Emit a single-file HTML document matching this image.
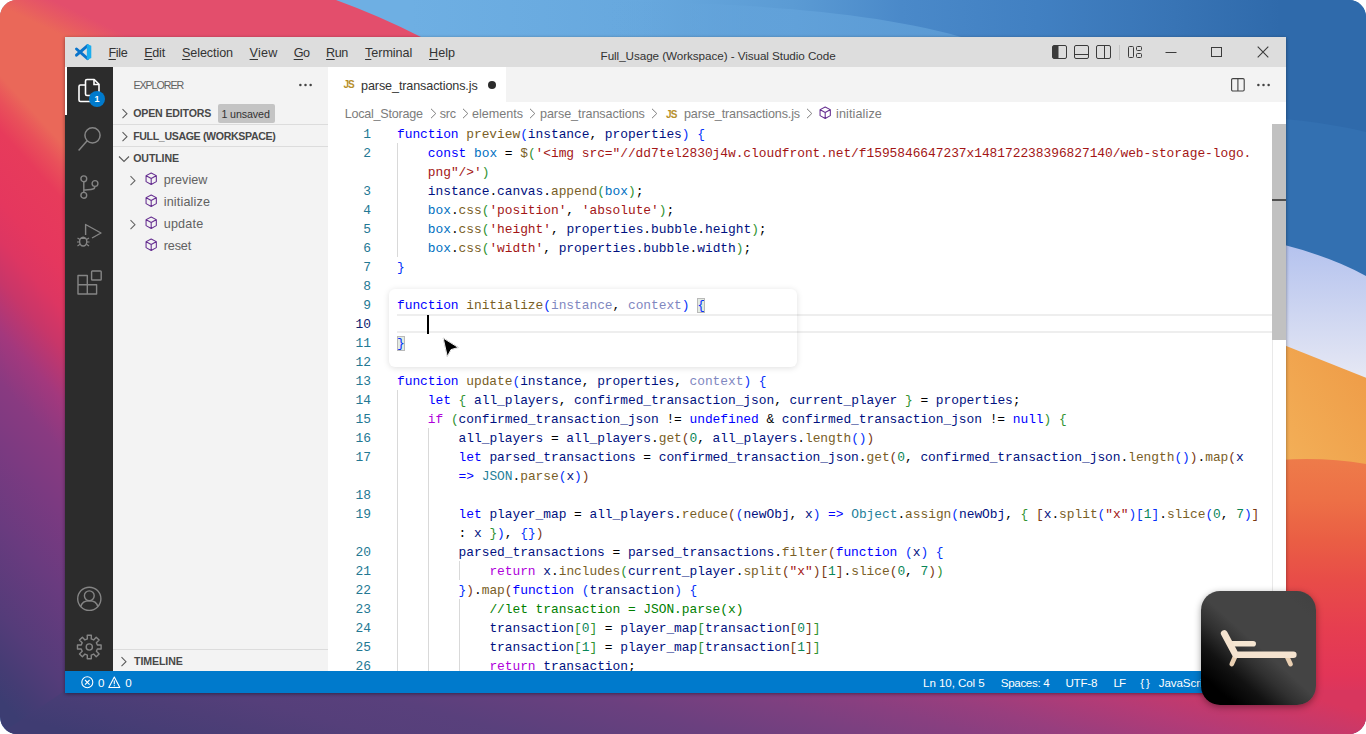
<!DOCTYPE html>
<html lang="en">
<head>
<meta charset="utf-8">
<title>Full_Usage (Workspace) - Visual Studio Code</title>
<style>
html,body{margin:0;padding:0;background:#fff;}
body{width:1366px;height:734px;position:relative;overflow:hidden;font-family:"Liberation Sans",sans-serif;}
#bg{position:absolute;left:0;top:0;width:1366px;height:734px;border-radius:17px;overflow:hidden;}
#bg svg{display:block;}
#win{position:absolute;left:65px;top:37px;width:1221px;height:656px;background:#fff;box-shadow:0 1px 3.500px rgba(0,0,0,.42);overflow:hidden;}
/* title bar */
#title{position:absolute;left:0;top:0;width:1221px;height:30px;background:#dddddd;color:#333;font-size:13px;}
#title .menu{position:absolute;top:0;height:30px;line-height:31px;font-size:12.6px;color:#333;white-space:nowrap;}
#title .menu u{text-decoration:underline;text-underline-offset:1.5px;}
#title .wt{position:absolute;top:0;left:0;width:1306px;text-align:center;line-height:37px;font-size:11.7px;color:#333;white-space:nowrap;}
/* activity bar */
#act{position:absolute;left:0;top:30px;width:48px;height:604px;background:#2c2c2c;}
#act svg{position:absolute;left:12px;}
/* side bar */
#side{position:absolute;left:48px;top:30px;width:215px;height:604px;background:#f3f3f3;color:#616161;font-size:13px;}
#side .hdr{position:absolute;left:20px;top:0;line-height:35px;font-size:10.6px;color:#6f6f6f;}
#side .sec{position:absolute;left:0;width:215px;height:22px;line-height:22px;font-weight:bold;font-size:10.4px;color:#3b3b3b;white-space:nowrap;}
#side .sec span.t{position:absolute;left:20px;top:0;}
#side .line{position:absolute;left:0;width:215px;height:1px;background:#dcdcdc;}
#side .it{position:absolute;left:0;width:215px;height:22px;line-height:22px;font-size:12.4px;color:#616161;white-space:nowrap;}
#side .it span.t{position:absolute;left:51px;top:0;}
/* editor */
#ed{position:absolute;left:263px;top:30px;width:958px;height:604px;background:#fff;overflow:hidden;}
#tabs{position:absolute;left:0;top:0;width:958px;height:35px;background:#f3f3f3;}
#tab{position:absolute;left:0;top:0;width:178px;height:35px;background:#fff;font-size:12.4px;color:#333;line-height:35px;white-space:nowrap;}
#crumbs{position:absolute;left:0;top:35px;width:958px;height:22px;line-height:22px;font-size:12.3px;color:#6a6a6a;white-space:nowrap;}
#code{position:absolute;left:0;top:57px;width:958px;height:547px;font-family:"Liberation Mono",monospace;font-size:12.9px;letter-spacing:-0.04px;}
.ln,.cl{margin-top:1px}
.ln{position:absolute;left:0;width:43px;text-align:right;height:19px;line-height:19px;color:#237893;white-space:pre;}
.cl{position:absolute;left:69px;height:19px;line-height:19px;color:#000;white-space:pre;}
.k{color:#0000ff}.f{color:#795e26}.v{color:#001080}.c{color:#0070c1}.s{color:#a31515}.n{color:#098658}
.ct{color:#af00db}.cm{color:#008000}.t{color:#267f99}.b1{color:#0431fa}.b2{color:#319331}.b3{color:#7b3814}
.un{color:#7f87bf}
.ln.cur{color:#0b216f}
.bm{background:#e3ebe3;outline:1px solid #b9b9b9;outline-offset:-1px}
.ig{position:absolute;width:1px;background:#d9d9d9;}
#card{position:absolute;left:389px;top:289px;width:408px;height:78px;border-radius:6px;box-shadow:0 1px 6px rgba(0,0,0,.13);pointer-events:none;}
#logo{position:absolute;left:1201px;top:590.500px;width:114.500px;height:114.500px;border-radius:19px;background:linear-gradient(222deg,#414141 0%,#444 15%,#444 49%,#303030 60%,#121212 72%,#000 86%);box-shadow:0 2px 7px rgba(0,0,0,.38);}
/* status */
#status{position:absolute;left:0;top:634px;width:1221px;height:22px;background:#007acc;color:#fff;font-size:11.6px;line-height:22px;white-space:nowrap;}
#status span{position:absolute;top:0;}
</style>
</head>
<body>
<div id="bg">
<svg width="1366" height="734" viewBox="0 0 1366 734">
<defs>
<linearGradient id="gBlue" gradientUnits="userSpaceOnUse" x1="0" y1="0" x2="1366" y2="0">
<stop offset="0.30" stop-color="#6eafe3"/><stop offset="0.47" stop-color="#67a8de"/><stop offset="0.58" stop-color="#5b9bd4"/><stop offset="0.66" stop-color="#4a89c9"/><stop offset="0.76" stop-color="#4180c2"/><stop offset="0.86" stop-color="#3874b5"/><stop offset="0.937" stop-color="#2f6aab"/><stop offset="1" stop-color="#2f6aab"/>
</linearGradient>
<linearGradient id="gSw" gradientUnits="userSpaceOnUse" x1="600" y1="0" x2="980" y2="0">
<stop offset="0" stop-color="#66a7dd" stop-opacity="0"/><stop offset="0.5" stop-color="#62a2da" stop-opacity="0.9"/><stop offset="1" stop-color="#5a99d3"/>
</linearGradient>
<linearGradient id="gRed" gradientUnits="userSpaceOnUse" x1="54" y1="31.6" x2="66" y2="6.4">
<stop offset="0" stop-color="#ea6859"/><stop offset="0.5" stop-color="#e75a62"/><stop offset="1" stop-color="#e34e6c"/>
</linearGradient>
<linearGradient id="gLeft" gradientUnits="userSpaceOnUse" x1="32" y1="0" x2="-333.6" y2="332.5">
<stop offset="0" stop-color="#ea6859"/><stop offset="0.15" stop-color="#ea6859"/><stop offset="0.185" stop-color="#e9505a"/><stop offset="0.226" stop-color="#e73b5b"/><stop offset="0.32" stop-color="#e5375e"/><stop offset="0.375" stop-color="#dd3662"/><stop offset="0.43" stop-color="#c83669"/><stop offset="0.50" stop-color="#a3387d"/><stop offset="0.568" stop-color="#893a81"/><stop offset="0.654" stop-color="#7b3a81"/><stop offset="0.763" stop-color="#693b7f"/><stop offset="0.886" stop-color="#543c79"/><stop offset="0.954" stop-color="#453c74"/><stop offset="1" stop-color="#3c3d72"/>
</linearGradient>
<linearGradient id="gBottom" gradientUnits="userSpaceOnUse" x1="0" y1="713" x2="98" y2="360">
<stop offset="0" stop-color="#3f3c72"/><stop offset="0.073" stop-color="#473d75"/><stop offset="0.146" stop-color="#4e3e77"/><stop offset="0.22" stop-color="#553f7a"/><stop offset="0.322" stop-color="#59407c"/><stop offset="0.476" stop-color="#6b407f"/><stop offset="0.586" stop-color="#7c4080"/><stop offset="0.659" stop-color="#893f80"/><stop offset="0.732" stop-color="#983e7e"/><stop offset="0.842" stop-color="#b43b76"/><stop offset="0.952" stop-color="#cd3866"/><stop offset="1" stop-color="#d8365e"/>
</linearGradient>
<linearGradient id="gLav" x1="0" y1="0" x2="0" y2="1">
<stop offset="0" stop-color="#b4c2ee"/><stop offset="1" stop-color="#e6e8f4"/>
</linearGradient>
<linearGradient id="gOr" x1="1" y1="0" x2="0" y2="1">
<stop offset="0" stop-color="#ee9a46"/><stop offset="1" stop-color="#f3b058"/>
</linearGradient>
<linearGradient id="gRight" gradientUnits="userSpaceOnUse" x1="0" y1="455" x2="0" y2="734">
<stop offset="0" stop-color="#ee7c4a"/><stop offset="0.16" stop-color="#ed7046"/><stop offset="0.305" stop-color="#ea5e44"/><stop offset="0.45" stop-color="#e84c48"/><stop offset="0.62" stop-color="#e63e50"/><stop offset="0.79" stop-color="#e23558"/><stop offset="0.895" stop-color="#d63661"/><stop offset="1" stop-color="#c43a6c"/>
</linearGradient>
</defs>
<rect x="0" y="0" width="1366" height="734" fill="url(#gBlue)"/>
<path d="M600 0 C 760 4 880 12 972 40 L600 40 Z" fill="url(#gSw)"/>
<rect x="1280" y="0" width="86" height="300" fill="#2f6aab"/>
<path d="M1280 118.500 Q1330 123 1366 132 V300 H1280 Z" fill="#3370b1"/>
<rect x="0" y="0" width="110" height="734" fill="url(#gLeft)"/>
<path d="M0 0 H336 Q380 16 421 37 V60 H66 V37 H0 Z" fill="url(#gRed)"/>
<rect x="1280" y="455" width="86" height="279" fill="url(#gRight)"/>
<path d="M1280 340 L1366 374 V464 Q1325 457 1280 460 Z" fill="url(#gOr)"/>
<path d="M1280 243.800 Q1332 257 1366 276 V377.700 L1280 343.400 Z" fill="url(#gLav)"/>
<path d="M66 690 H1366 V734 H0 V734 Z" fill="url(#gBottom)"/>
</svg>
</div>
<div id="win">
<div id="title">
<svg style="position:absolute;left:5px;top:3px" width="28" height="24" viewBox="0 0 28 24"><g fill="none" stroke="#0a74cb" stroke-width="2.9" stroke-linecap="round"><path d="M6.500 9 L17.600 18.600"/><path d="M6.500 15.200 L17.600 5.600"/></g><path d="M16.850 4.100 L21.300 5.800 V18 L16.850 20.100 Z" fill="#1badee"/></svg>
<span style="position:absolute;left:43.5px;top:0px;line-height:33px;font-size:12.6px;letter-spacing:-0.348px;white-space:pre;color:#333;text-underline-offset:1.5px;"><u>F</u>ile</span>
<span style="position:absolute;left:79.2px;top:0px;line-height:33px;font-size:12.6px;letter-spacing:-0.250px;white-space:pre;color:#333;text-underline-offset:1.5px;"><u>E</u>dit</span>
<span style="position:absolute;left:117.0px;top:0px;line-height:33px;font-size:12.6px;letter-spacing:-0.090px;white-space:pre;color:#333;text-underline-offset:1.5px;"><u>S</u>election</span>
<span style="position:absolute;left:184.6px;top:0px;line-height:33px;font-size:12.6px;letter-spacing:0.208px;white-space:pre;color:#333;text-underline-offset:1.5px;"><u>V</u>iew</span>
<span style="position:absolute;left:228.7px;top:0px;line-height:33px;font-size:12.6px;letter-spacing:-0.450px;white-space:pre;color:#333;text-underline-offset:1.5px;"><u>G</u>o</span>
<span style="position:absolute;left:261.1px;top:0px;line-height:33px;font-size:12.6px;letter-spacing:-0.501px;white-space:pre;color:#333;text-underline-offset:1.5px;"><u>R</u>un</span>
<span style="position:absolute;left:300.1px;top:0px;line-height:33px;font-size:12.6px;letter-spacing:-0.061px;white-space:pre;color:#333;text-underline-offset:1.5px;"><u>T</u>erminal</span>
<span style="position:absolute;left:364.0px;top:0px;line-height:33px;font-size:12.6px;letter-spacing:0.075px;white-space:pre;color:#333;text-underline-offset:1.5px;"><u>H</u>elp</span>
<span style="position:absolute;left:535.6px;top:0px;line-height:37px;font-size:11.7px;letter-spacing:-0.069px;white-space:pre;color:#333;">Full_Usage (Workspace) - Visual Studio Code</span>
<svg style="position:absolute;left:987px;top:8px" width="15" height="14" viewBox="0 0 15 14"><rect x="0.5" y="0.5" width="14" height="13" rx="1.5" fill="none" stroke="#3b3b3b"/><path d="M1 1 H6.5 V13 H1 Z" fill="#3b3b3b"/></svg>
<svg style="position:absolute;left:1009px;top:8px" width="15" height="14" viewBox="0 0 15 14"><rect x="0.5" y="0.5" width="14" height="13" rx="1.5" fill="none" stroke="#3b3b3b"/><path d="M1 9.5 H14" stroke="#3b3b3b" fill="none"/></svg>
<svg style="position:absolute;left:1031px;top:8px" width="15" height="14" viewBox="0 0 15 14"><rect x="0.5" y="0.5" width="14" height="13" rx="1.5" fill="none" stroke="#3b3b3b"/><path d="M8.5 1 V13" stroke="#3b3b3b" fill="none"/></svg>
<div style="position:absolute;left:1054px;top:8px;width:1px;height:15px;background:#c4c4c4"></div>
<svg style="position:absolute;left:1063px;top:8px" width="15" height="14" viewBox="0 0 15 14"><rect x="0.5" y="1.5" width="5" height="11" rx="1" fill="none" stroke="#3b3b3b"/><rect x="8.5" y="1.5" width="5" height="4" rx="1" fill="none" stroke="#3b3b3b"/><rect x="8.5" y="8.5" width="5" height="4" rx="1" fill="none" stroke="#3b3b3b"/></svg>
<svg style="position:absolute;left:1100px;top:10px" width="12" height="12" viewBox="0 0 12 12"><path d="M0.5 5.5 H11.5" stroke="#3b3b3b" fill="none"/></svg>
<svg style="position:absolute;left:1146px;top:10px" width="11" height="11" viewBox="0 0 11 11"><rect x="0.5" y="0.5" width="10" height="9" fill="none" stroke="#3b3b3b"/></svg>
<svg style="position:absolute;left:1192px;top:9px" width="12" height="12" viewBox="0 0 12 12"><path d="M0.7 0.7 L11.3 11.3 M11.3 0.7 L0.7 11.3" stroke="#3b3b3b" stroke-width="1.1" fill="none"/></svg>
</div>
<div id="act">
<div style="position:absolute;left:0;top:0;width:2px;height:48px;background:#fff"></div>
<svg style="position:absolute;left:12px;top:10px" width="26" height="26" viewBox="0 0 26 26"><path d="M8.5 4 Q8.5 2.5 10 2.5 H17.2 L22 7.3 V17 Q22 18.5 20.5 18.5 H10 Q8.5 18.5 8.5 17 Z" fill="none" stroke="#fff" stroke-width="1.6" stroke-linejoin="round"/><path d="M17 2.5 V7.5 H22" fill="none" stroke="#fff" stroke-width="1.6"/><path d="M8.5 8 H3.5 Q2 8 2 9.5 V23 Q2 24.5 3.5 24.5 H13.5 Q15 24.5 15 23 V18.5" fill="none" stroke="#fff" stroke-width="1.6" stroke-linejoin="round"/></svg>
<div style="position:absolute;left:24px;top:54px;width:16px;height:16px;border-radius:8px;background:#007acc;color:#fff;font-size:9px;font-weight:bold;line-height:16px;text-align:center;top:24px">1</div>
<svg style="position:absolute;left:12px;top:58px" width="26" height="28" viewBox="0 0 26 28"><circle cx="15.5" cy="10.3" r="7.6" fill="none" stroke="#858585" stroke-width="1.5"/><path d="M10.2 15.8 L1.6 25.5" stroke="#858585" stroke-width="1.5" fill="none"/></svg>
<svg style="position:absolute;left:12px;top:106px" width="26" height="28" viewBox="0 0 26 28"><circle cx="6.8" cy="5.8" r="2.9" fill="none" stroke="#858585" stroke-width="1.4"/><circle cx="18" cy="10.5" r="2.9" fill="none" stroke="#858585" stroke-width="1.4"/><circle cx="6.8" cy="22.3" r="2.9" fill="none" stroke="#858585" stroke-width="1.4"/><path d="M6.8 8.7 V19.4 M18 13.4 C18 17 13 16.3 6.8 17" fill="none" stroke="#858585" stroke-width="1.4"/></svg>
<svg style="position:absolute;left:12px;top:154px" width="28" height="28" viewBox="0 0 28 28"><path d="M8.6 14 V3.5 L24 12 L15 17" fill="none" stroke="#858585" stroke-width="1.4" stroke-linejoin="round"/><ellipse cx="6.2" cy="20.6" rx="3.6" ry="4.4" fill="none" stroke="#858585" stroke-width="1.4"/><path d="M0.5 17 L3 18.5 M0 21 H2.6 M0.5 25 L3 23.3 M12 17 L9.5 18.5 M12.5 21 H9.8 M12 25 L9.5 23.3 M3.5 17.5 H9" stroke="#858585" stroke-width="1.2" fill="none"/></svg>
<svg style="position:absolute;left:12px;top:203px" width="26" height="26" viewBox="0 0 26 26"><path d="M1 5.5 H10.3 V14.8 H19.6 V24 H1 Z M1 14.8 H10.3 V24" fill="none" stroke="#858585" stroke-width="1.4" stroke-linejoin="round"/><rect x="14.6" y="1" width="9.6" height="9" rx="0.8" fill="none" stroke="#858585" stroke-width="1.4"/></svg>
<svg style="position:absolute;left:11px;top:519px" width="27" height="27" viewBox="0 0 27 27"><circle cx="13.3" cy="12.8" r="11.6" fill="none" stroke="#858585" stroke-width="1.4"/><circle cx="13.3" cy="9.8" r="4.9" fill="none" stroke="#858585" stroke-width="1.4"/><path d="M4.8 20.6 C6 15.6 10 14.7 13.3 14.7 C16.6 14.7 20.6 15.6 21.8 20.6" fill="none" stroke="#858585" stroke-width="1.4"/></svg>
<svg style="position:absolute;left:11px;top:567px" width="27" height="27" viewBox="0 0 27 27"><path d="M25.12 10.94 L25.12 15.06 L21.37 14.94 L20.38 17.34 L23.12 19.90 L20.20 22.82 L17.64 20.08 L15.24 21.07 L15.36 24.82 L11.24 24.82 L11.36 21.07 L8.96 20.08 L6.40 22.82 L3.48 19.90 L6.22 17.34 L5.23 14.94 L1.48 15.06 L1.48 10.94 L5.23 11.06 L6.22 8.66 L3.48 6.10 L6.40 3.18 L8.96 5.92 L11.36 4.93 L11.24 1.18 L15.36 1.18 L15.24 4.93 L17.64 5.92 L20.20 3.18 L23.12 6.10 L20.38 8.66 L21.37 11.06 Z" fill="none" stroke="#858585" stroke-width="1.4" stroke-linejoin="round"/><circle cx="13.3" cy="13" r="3.1" fill="none" stroke="#858585" stroke-width="1.4"/></svg>
</div>
<div id="side">
<span style="position:absolute;left:20.4px;top:0px;line-height:36px;font-size:10.7px;letter-spacing:-1.051px;white-space:pre;color:#616161;">EXPLORER</span>
<svg style="position:absolute;left:185px;top:15px" width="16" height="6" viewBox="0 0 16 6"><circle cx="2.400" cy="3" r="1.250" fill="#424242"/><circle cx="7.500" cy="3" r="1.250" fill="#424242"/><circle cx="12.600" cy="3" r="1.250" fill="#424242"/></svg>
<svg style="position:absolute;left:7.5px;top:41.0px" width="8" height="12" viewBox="0 0 8 12"><path d="M1.5 1.2 L6 5.700 L1.5 10.200" fill="none" stroke="#5a5a5a" stroke-width="1.05"/></svg>
<span style="position:absolute;left:20.2px;top:35px;line-height:23px;font-size:10.6px;letter-spacing:-0.155px;white-space:pre;font-weight:bold;color:#484848;">OPEN EDITORS</span>
<div style="position:absolute;left:104.5px;top:37px;width:57px;height:18.5px;border-radius:2px;background:#c4c4c4"></div>
<span style="position:absolute;left:108.4px;top:35px;line-height:24px;font-size:10.7px;letter-spacing:-0.102px;white-space:pre;color:#333;">1 unsaved</span>
<div class="line" style="top:57px"></div>
<svg style="position:absolute;left:7.5px;top:63.5px" width="8" height="12" viewBox="0 0 8 12"><path d="M1.5 1.2 L6 5.700 L1.5 10.200" fill="none" stroke="#5a5a5a" stroke-width="1.05"/></svg>
<span style="position:absolute;left:20.2px;top:58px;line-height:22px;font-size:10.6px;letter-spacing:-0.349px;white-space:pre;font-weight:bold;color:#484848;">FULL_USAGE (WORKSPACE)</span>
<div class="line" style="top:79px"></div>
<svg style="position:absolute;left:4.5px;top:88px" width="12" height="8" viewBox="0 0 12 8"><path d="M1 1.5 L6 6.5 L11 1.5" fill="none" stroke="#5a5a5a" stroke-width="1.1"/></svg>
<span style="position:absolute;left:20.2px;top:80px;line-height:22px;font-size:10.6px;letter-spacing:-0.099px;white-space:pre;font-weight:bold;color:#484848;">OUTLINE</span>
<svg style="position:absolute;left:16px;top:107.5px" width="8" height="12" viewBox="0 0 8 12"><path d="M1.5 1.2 L6 5.700 L1.5 10.200" fill="none" stroke="#646464" stroke-width="1.05"/></svg>
<svg style="position:absolute;left:32.30000000000001px;top:105.2px" width="12.4" height="13.4" viewBox="0 0 14 15"><path d="M7 1 L12.8 4 V10.8 L7 14 L1.2 10.8 V4 Z M1.4 4.1 L7 7.2 L12.6 4.1 M7 7.2 V13.8" fill="none" stroke="#652d90" stroke-width="1.2" stroke-linejoin="round"/></svg>
<span style="position:absolute;left:50.7px;top:102px;line-height:22px;font-size:12.6px;letter-spacing:0.058px;white-space:pre;color:#616161;">preview</span>
<svg style="position:absolute;left:32.30000000000001px;top:127.2px" width="12.4" height="13.4" viewBox="0 0 14 15"><path d="M7 1 L12.8 4 V10.8 L7 14 L1.2 10.8 V4 Z M1.4 4.1 L7 7.2 L12.6 4.1 M7 7.2 V13.8" fill="none" stroke="#652d90" stroke-width="1.2" stroke-linejoin="round"/></svg>
<span style="position:absolute;left:50.7px;top:124px;line-height:22px;font-size:12.6px;letter-spacing:0.160px;white-space:pre;color:#616161;">initialize</span>
<svg style="position:absolute;left:16px;top:151.5px" width="8" height="12" viewBox="0 0 8 12"><path d="M1.5 1.2 L6 5.700 L1.5 10.200" fill="none" stroke="#646464" stroke-width="1.05"/></svg>
<svg style="position:absolute;left:32.30000000000001px;top:149.2px" width="12.4" height="13.4" viewBox="0 0 14 15"><path d="M7 1 L12.8 4 V10.8 L7 14 L1.2 10.8 V4 Z M1.4 4.1 L7 7.2 L12.6 4.1 M7 7.2 V13.8" fill="none" stroke="#652d90" stroke-width="1.2" stroke-linejoin="round"/></svg>
<span style="position:absolute;left:50.7px;top:146px;line-height:22px;font-size:12.6px;letter-spacing:0.197px;white-space:pre;color:#616161;">update</span>
<svg style="position:absolute;left:32.30000000000001px;top:171.2px" width="12.4" height="13.4" viewBox="0 0 14 15"><path d="M7 1 L12.8 4 V10.8 L7 14 L1.2 10.8 V4 Z M1.4 4.1 L7 7.2 L12.6 4.1 M7 7.2 V13.8" fill="none" stroke="#652d90" stroke-width="1.2" stroke-linejoin="round"/></svg>
<span style="position:absolute;left:50.7px;top:168px;line-height:22px;font-size:12.6px;letter-spacing:-0.120px;white-space:pre;color:#616161;">reset</span>
<div class="line" style="top:582px"></div>
<svg style="position:absolute;left:7px;top:588.5px" width="8" height="12" viewBox="0 0 8 12"><path d="M1.5 1.2 L6 5.700 L1.5 10.200" fill="none" stroke="#5a5a5a" stroke-width="1.05"/></svg>
<span style="position:absolute;left:21.0px;top:583px;line-height:22px;font-size:10.6px;letter-spacing:-0.092px;white-space:pre;font-weight:bold;color:#484848;">TIMELINE</span>
</div>
<div id="ed">
<div id="tabs"><div id="tab">
<span style="position:absolute;left:15.4px;top:0px;line-height:35px;font-size:10px;letter-spacing:-0.916px;white-space:pre;font-weight:bold;color:#b7902c;">JS</span>
<span style="position:absolute;left:33.1px;top:1px;line-height:36px;font-size:12.6px;letter-spacing:-0.119px;white-space:pre;color:#333;">parse_transactions.js</span>
<div style="position:absolute;left:160px;top:14px;width:8px;height:8px;border-radius:4px;background:#2b2b2b"></div>
</div>
<svg style="position:absolute;left:902.5px;top:11px" width="14" height="14" viewBox="0 0 14 14"><rect x="0.6" y="0.6" width="12.6" height="12.4" rx="1.2" fill="none" stroke="#424242" stroke-width="1.1"/><path d="M6.9 0.6 V13" stroke="#424242" stroke-width="1.1"/></svg>
<svg style="position:absolute;left:927.5px;top:15px" width="16" height="6" viewBox="0 0 16 6"><circle cx="2.400" cy="3" r="1.250" fill="#424242"/><circle cx="7.500" cy="3" r="1.250" fill="#424242"/><circle cx="12.600" cy="3" r="1.250" fill="#424242"/></svg>
</div>
<div id="crumbs">
<span style="position:absolute;left:16.7px;top:1px;line-height:23px;font-size:12.6px;letter-spacing:-0.240px;white-space:pre;color:#7c7c7c;">Local_Storage</span>
<svg style="position:absolute;left:101.5px;top:5.799999999999997px" width="7" height="11" viewBox="0 0 7 11"><path d="M1 0.8 L5.8 5.5 L1 10.2" fill="none" stroke="#7c7c7c" stroke-width="1"/></svg>
<span style="position:absolute;left:111.7px;top:1px;line-height:23px;font-size:12.6px;letter-spacing:-0.263px;white-space:pre;color:#7c7c7c;">src</span>
<svg style="position:absolute;left:133.5px;top:5.799999999999997px" width="7" height="11" viewBox="0 0 7 11"><path d="M1 0.8 L5.8 5.5 L1 10.2" fill="none" stroke="#7c7c7c" stroke-width="1"/></svg>
<span style="position:absolute;left:143.9px;top:1px;line-height:23px;font-size:12.6px;letter-spacing:0.012px;white-space:pre;color:#7c7c7c;">elements</span>
<svg style="position:absolute;left:200.5px;top:5.799999999999997px" width="7" height="11" viewBox="0 0 7 11"><path d="M1 0.8 L5.8 5.5 L1 10.2" fill="none" stroke="#7c7c7c" stroke-width="1"/></svg>
<span style="position:absolute;left:212.0px;top:1px;line-height:23px;font-size:12.6px;letter-spacing:-0.089px;white-space:pre;color:#7c7c7c;">parse_transactions</span>
<svg style="position:absolute;left:322.5px;top:5.799999999999997px" width="7" height="11" viewBox="0 0 7 11"><path d="M1 0.8 L5.8 5.5 L1 10.2" fill="none" stroke="#7c7c7c" stroke-width="1"/></svg>
<span style="position:absolute;left:338.1px;top:1px;line-height:23px;font-size:10px;letter-spacing:-0.866px;white-space:pre;font-weight:bold;color:#b7902c;">JS</span>
<span style="position:absolute;left:356.0px;top:1px;line-height:23px;font-size:12.6px;letter-spacing:-0.143px;white-space:pre;color:#7c7c7c;">parse_transactions.js</span>
<svg style="position:absolute;left:478px;top:5.799999999999997px" width="7" height="11" viewBox="0 0 7 11"><path d="M1 0.8 L5.8 5.5 L1 10.2" fill="none" stroke="#7c7c7c" stroke-width="1"/></svg>
<svg style="position:absolute;left:490.5px;top:4.2px" width="12.4" height="13.4" viewBox="0 0 14 15"><path d="M7 1 L12.8 4 V10.8 L7 14 L1.2 10.8 V4 Z M1.4 4.1 L7 7.2 L12.6 4.1 M7 7.2 V13.8" fill="none" stroke="#652d90" stroke-width="1.2" stroke-linejoin="round"/></svg>
<span style="position:absolute;left:508.1px;top:1px;line-height:23px;font-size:12.6px;letter-spacing:0.100px;white-space:pre;color:#7c7c7c;">initialize</span>
</div>
<div id="code">
<div style="position:absolute;left:69px;top:190px;width:875px;height:15px;border-top:2px solid #eee;border-bottom:2px solid #eee"></div>
<div class="ln" style="top:0px">1</div>
<div class="cl" style="top:0px;left:69.0px"><span class="k">function</span> <span class="f">preview</span><span class="b1">(</span><span class="v">instance</span>, <span class="v">properties</span><span class="b1">)</span> <span class="b1">{</span></div>
<div class="ln" style="top:19px">2</div>
<div class="cl" style="top:19px;left:99.8px"><span class="k">const</span> <span class="c">box</span> = <span class="f">$</span><span class="b2">(</span><span class="s">&#x27;&lt;img src=&quot;//dd7tel2830j4w.cloudfront.net/f1595846647237x148172238396827140/web-storage-logo.</span></div>
<div class="cl" style="top:38px;left:99.8px"><span class="s">png&quot;/&gt;&#x27;</span><span class="b2">)</span></div>
<div class="ln" style="top:57px">3</div>
<div class="cl" style="top:57px;left:99.8px"><span class="v">instance</span>.<span class="v">canvas</span>.<span class="f">append</span><span class="b2">(</span><span class="c">box</span><span class="b2">)</span>;</div>
<div class="ln" style="top:76px">4</div>
<div class="cl" style="top:76px;left:99.8px"><span class="c">box</span>.<span class="f">css</span><span class="b2">(</span><span class="s">&#x27;position&#x27;</span>, <span class="s">&#x27;absolute&#x27;</span><span class="b2">)</span>;</div>
<div class="ln" style="top:95px">5</div>
<div class="cl" style="top:95px;left:99.8px"><span class="c">box</span>.<span class="f">css</span><span class="b2">(</span><span class="s">&#x27;height&#x27;</span>, <span class="v">properties</span>.<span class="v">bubble</span>.<span class="v">height</span><span class="b2">)</span>;</div>
<div class="ln" style="top:114px">6</div>
<div class="cl" style="top:114px;left:99.8px"><span class="c">box</span>.<span class="f">css</span><span class="b2">(</span><span class="s">&#x27;width&#x27;</span>, <span class="v">properties</span>.<span class="v">bubble</span>.<span class="v">width</span><span class="b2">)</span>;</div>
<div class="ln" style="top:133px">7</div>
<div class="cl" style="top:133px;left:69.0px"><span class="b1">}</span></div>
<div class="ln" style="top:152px">8</div>
<div class="ln" style="top:171px">9</div>
<div class="cl" style="top:171px;left:69.0px"><span class="k">function</span> <span class="f">initialize</span><span class="b1">(</span><span class="un">instance</span>, <span class="un">context</span><span class="b1">)</span> <span class="b1 bm">{</span></div>
<div class="ln cur" style="top:190px">10</div>
<div class="ln" style="top:209px">11</div>
<div class="cl" style="top:209px;left:69.0px"><span class="b1 bm">}</span></div>
<div class="ln" style="top:228px">12</div>
<div class="ln" style="top:247px">13</div>
<div class="cl" style="top:247px;left:69.0px"><span class="k">function</span> <span class="f">update</span><span class="b1">(</span><span class="v">instance</span>, <span class="v">properties</span>, <span class="un">context</span><span class="b1">)</span> <span class="b1">{</span></div>
<div class="ln" style="top:266px">14</div>
<div class="cl" style="top:266px;left:99.8px"><span class="k">let</span> <span class="b2">{</span> <span class="v">all_players</span>, <span class="v">confirmed_transaction_json</span>, <span class="v">current_player</span> <span class="b2">}</span> = <span class="v">properties</span>;</div>
<div class="ln" style="top:285px">15</div>
<div class="cl" style="top:285px;left:99.8px"><span class="ct">if</span> <span class="b2">(</span><span class="v">confirmed_transaction_json</span> != <span class="k">undefined</span> &amp; <span class="v">confirmed_transaction_json</span> != <span class="k">null</span><span class="b2">)</span> <span class="b2">{</span></div>
<div class="ln" style="top:304px">16</div>
<div class="cl" style="top:304px;left:130.6px"><span class="v">all_players</span> = <span class="v">all_players</span>.<span class="f">get</span><span class="b3">(</span><span class="n">0</span>, <span class="v">all_players</span>.<span class="f">length</span><span class="b1">()</span><span class="b3">)</span></div>
<div class="ln" style="top:323px">17</div>
<div class="cl" style="top:323px;left:130.6px"><span class="k">let</span> <span class="v">parsed_transactions</span> = <span class="v">confirmed_transaction_json</span>.<span class="f">get</span><span class="b3">(</span><span class="n">0</span>, <span class="v">confirmed_transaction_json</span>.<span class="f">length</span><span class="b1">()</span><span class="b3">)</span>.<span class="f">map</span><span class="b3">(</span><span class="v">x</span></div>
<div class="cl" style="top:342px;left:130.6px"><span class="k">=&gt;</span> <span class="t">JSON</span>.<span class="f">parse</span><span class="b1">(</span><span class="v">x</span><span class="b1">)</span><span class="b3">)</span></div>
<div class="ln" style="top:361px">18</div>
<div class="ln" style="top:380px">19</div>
<div class="cl" style="top:380px;left:130.6px"><span class="k">let</span> <span class="v">player_map</span> = <span class="v">all_players</span>.<span class="f">reduce</span><span class="b3">(</span><span class="b1">(</span><span class="v">newObj</span>, <span class="v">x</span><span class="b1">)</span> <span class="k">=&gt;</span> <span class="t">Object</span>.<span class="f">assign</span><span class="b1">(</span><span class="v">newObj</span>, <span class="b2">{</span> <span class="b3">[</span><span class="v">x</span>.<span class="f">split</span><span class="b1">(</span><span class="s">&quot;x&quot;</span><span class="b1">)</span><span class="b1">[</span><span class="n">1</span><span class="b1">]</span>.<span class="f">slice</span><span class="b1">(</span><span class="n">0</span>, <span class="n">7</span><span class="b1">)</span><span class="b3">]</span></div>
<div class="cl" style="top:399px;left:130.6px">: <span class="v">x</span> <span class="b2">}</span><span class="b1">)</span>, <span class="b1">{}</span><span class="b3">)</span></div>
<div class="ln" style="top:418px">20</div>
<div class="cl" style="top:418px;left:130.6px"><span class="v">parsed_transactions</span> = <span class="v">parsed_transactions</span>.<span class="f">filter</span><span class="b3">(</span><span class="k">function</span> <span class="b1">(</span><span class="v">x</span><span class="b1">)</span> <span class="b1">{</span></div>
<div class="ln" style="top:437px">21</div>
<div class="cl" style="top:437px;left:161.4px"><span class="ct">return</span> <span class="v">x</span>.<span class="f">includes</span><span class="b2">(</span><span class="v">current_player</span>.<span class="f">split</span><span class="b3">(</span><span class="s">&quot;x&quot;</span><span class="b3">)</span><span class="b3">[</span><span class="n">1</span><span class="b3">]</span>.<span class="f">slice</span><span class="b3">(</span><span class="n">0</span>, <span class="n">7</span><span class="b3">)</span><span class="b2">)</span></div>
<div class="ln" style="top:456px">22</div>
<div class="cl" style="top:456px;left:130.6px"><span class="b1">}</span><span class="b3">)</span>.<span class="f">map</span><span class="b3">(</span><span class="k">function</span> <span class="b1">(</span><span class="v">transaction</span><span class="b1">)</span> <span class="b1">{</span></div>
<div class="ln" style="top:475px">23</div>
<div class="cl" style="top:475px;left:161.4px"><span class="cm">//let transaction = JSON.parse(x)</span></div>
<div class="ln" style="top:494px">24</div>
<div class="cl" style="top:494px;left:161.4px"><span class="v">transaction</span><span class="b2">[</span><span class="n">0</span><span class="b2">]</span> = <span class="v">player_map</span><span class="b2">[</span><span class="v">transaction</span><span class="b3">[</span><span class="n">0</span><span class="b3">]</span><span class="b2">]</span></div>
<div class="ln" style="top:513px">25</div>
<div class="cl" style="top:513px;left:161.4px"><span class="v">transaction</span><span class="b2">[</span><span class="n">1</span><span class="b2">]</span> = <span class="v">player_map</span><span class="b2">[</span><span class="v">transaction</span><span class="b3">[</span><span class="n">1</span><span class="b3">]</span><span class="b2">]</span></div>
<div class="ln" style="top:532px">26</div>
<div class="cl" style="top:532px;left:161.4px"><span class="ct">return</span> <span class="v">transaction</span>;</div>
<div class="ig" style="left:69.0px;top:19px;height:114px"></div>
<div class="ig" style="left:69.0px;top:266px;height:285px"></div>
<div class="ig" style="left:99.8px;top:304px;height:247px"></div>
<div class="ig" style="left:130.6px;top:437px;height:19px"></div>
<div class="ig" style="left:130.6px;top:475px;height:76px"></div>
<div style="position:absolute;left:98.60000000000002px;top:190.5px;width:2.3px;height:19px;background:#000"></div>
</div>
<div style="position:absolute;left:944px;top:57px;width:14px;height:547px;border-left:1px solid #e9e9e9;box-sizing:border-box"></div>
<div style="position:absolute;left:944px;top:57px;width:14px;height:216px;background:#c1c1c1"></div>
<div style="position:absolute;left:944px;top:131.5px;width:14px;height:2px;background:#505050"></div>
</div>
<div id="status">
<svg style="position:absolute;left:16px;top:4.5px" width="13" height="13" viewBox="0 0 13 13"><circle cx="6.3" cy="6.3" r="5.5" fill="none" stroke="#fff" stroke-width="1.1"/><path d="M4 4 L8.6 8.6 M8.6 4 L4 8.6" stroke="#fff" stroke-width="1.1"/></svg>
<span style="position:absolute;left:33.0px;top:1px;line-height:22px;font-size:11.6px;letter-spacing:-0.248px;white-space:pre;color:#fff;">0</span>
<svg style="position:absolute;left:43.3px;top:4.5px" width="13" height="13" viewBox="0 0 13 13"><path d="M6.3 1 L11.8 11.5 H0.8 Z" fill="none" stroke="#fff" stroke-width="1.1" stroke-linejoin="round"/><path d="M6.3 4.6 V8.2 M6.3 9.2 V10.3" stroke="#fff" stroke-width="1.1"/></svg>
<span style="position:absolute;left:60.2px;top:1px;line-height:22px;font-size:11.6px;letter-spacing:-0.248px;white-space:pre;color:#fff;">0</span>
<span style="position:absolute;left:858.1px;top:1px;line-height:22px;font-size:11.6px;letter-spacing:-0.085px;white-space:pre;color:#fff;">Ln 10, Col 5</span>
<span style="position:absolute;left:935.8px;top:1px;line-height:22px;font-size:11.6px;letter-spacing:-0.340px;white-space:pre;color:#fff;">Spaces: 4</span>
<span style="position:absolute;left:1000.5px;top:1px;line-height:22px;font-size:11.6px;letter-spacing:-0.249px;white-space:pre;color:#fff;">UTF-8</span>
<span style="position:absolute;left:1048.5px;top:1px;line-height:22px;font-size:11.6px;letter-spacing:-0.915px;white-space:pre;color:#fff;">LF</span>
<span style="position:absolute;left:1075.2px;top:1px;line-height:21px;font-size:11.6px;letter-spacing:1.978px;white-space:pre;color:#fff;">{}</span>
<span style="position:absolute;left:1093.8px;top:1px;line-height:22px;font-size:11.6px;letter-spacing:-0.112px;white-space:pre;color:#fff;">JavaScript</span>
</div>
</div>
<div id="card"></div>
<svg id="mouse" style="position:absolute;left:440px;top:335px" width="24" height="26" viewBox="0 0 24 26"><path d="M3.200 3.100 L18.300 12.500 L11 14.600 L7.300 21.500 Z" fill="#000" stroke="#fff" stroke-width="0.9" stroke-linejoin="round" style="filter:drop-shadow(0 0.500px 0.600px rgba(0,0,0,.45))"/></svg>
<div id="logo"><svg width="115" height="115" viewBox="0 0 114 114"><defs><linearGradient id="gL" x1="0" y1="0" x2="0" y2="1"><stop offset="0" stop-color="#f8ead8"/><stop offset="1" stop-color="#e6c8a8"/></linearGradient></defs><g fill="none" stroke="url(#gL)" stroke-linecap="round" stroke-linejoin="round"><path d="M30.500 72.500 L34.500 63.500" stroke-width="4.600" stroke="#e9cfb2"/><path d="M84.500 63.500 L88.800 72.500" stroke-width="4.600" stroke="#e9cfb2"/><path d="M29 52.300 H51.700" stroke-width="5.600" stroke="#f6e6d2"/><path d="M23 42 L34.300 63.200 H91.500" stroke-width="6.600" stroke="#f5e3cf"/></g></svg></div>
</body>
</html>
